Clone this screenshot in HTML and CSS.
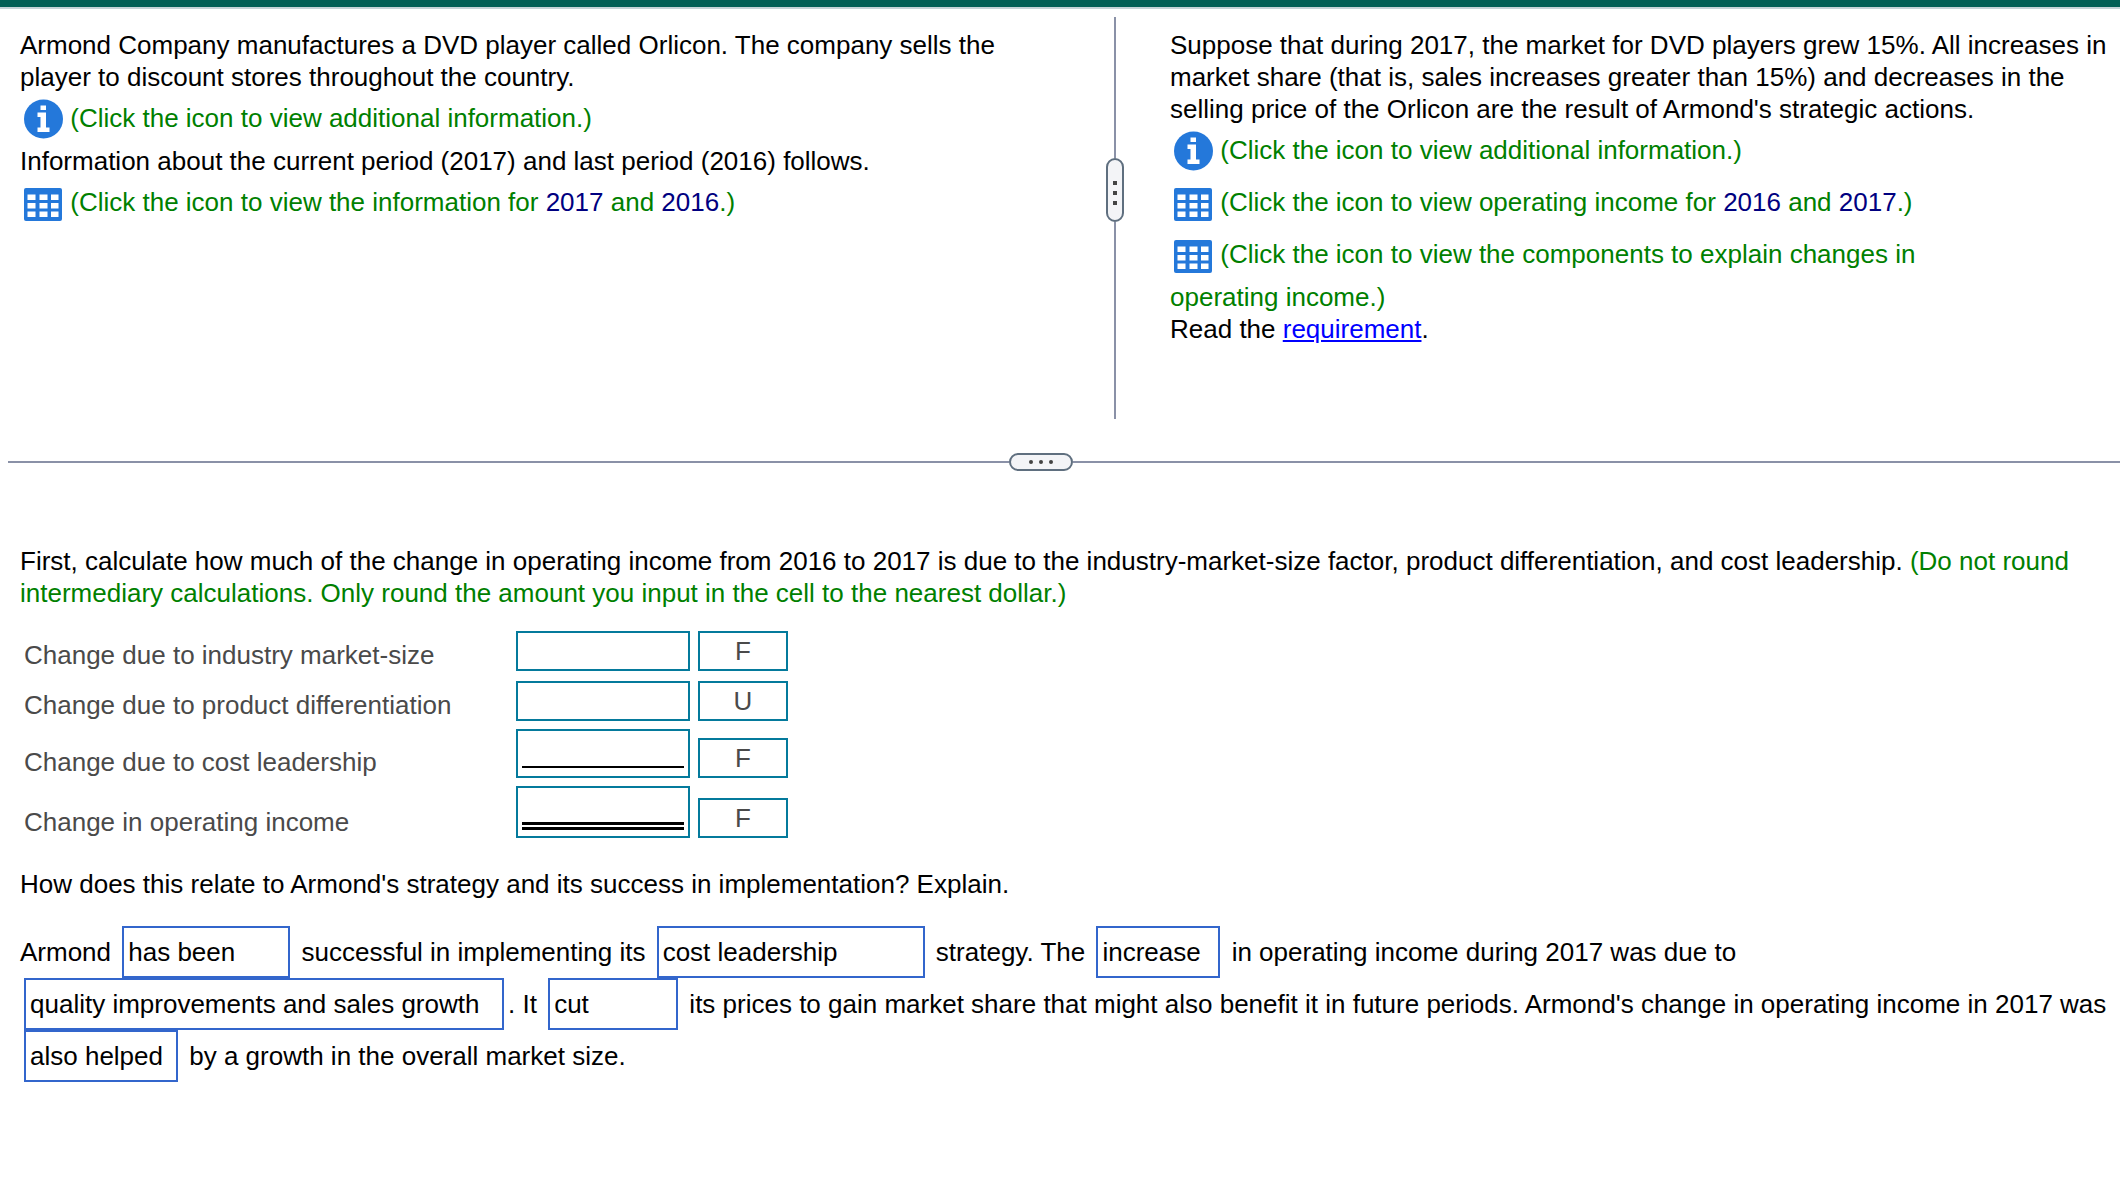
FILE: index.html
```html
<!doctype html>
<html lang="en">
<head>
    <meta charset="UTF-8">
    <meta name="viewport" content="width=device-width, initial-scale=1">
    <title>Armond Company</title>
    <link rel="stylesheet" href="styles.css">
</head>
<body>
<!-- shared icons -->
<svg class="sprite" aria-hidden="true">
    <symbol id="icon-info" viewBox="0 0 43 52">
        <circle cx="23.5" cy="26" r="19.5" fill="#2478da"/>
        <path fill="#fff" d="M20.5 12.5h5.5v4.5h-5.5zM17.5 19.5H26v15h3.5V39h-12v-4.500h3V24h-3z"/>
    </symbol>
    <symbol id="icon-table" viewBox="0 0 43 52">
        <rect x="4" y="11" width="38" height="33" rx="2" fill="#2478da"/>
        <path fill="#fff" d="M7.500 17.500h8v5.500h-8zM19.500 17.500h8v5.500h-8zM31 17.500h7.500v5.500H31zM7.500 26h8v5.500h-8zM19.500 26h8v5.500h-8zM31 26h7.500v5.500H31zM7.500 34.500h8V40h-8zM19.500 34.500h8V40h-8zM31 34.500h7.500V40H31z"/>
    </symbol>
</svg>
<header class="topbar"></header>
<main>
    <div class="panes">
        <section class="pane">
            Armond Company manufactures a DVD player called Orlicon. The company sells the player to discount stores throughout the country.<br>
            <button type="button" class="icon_btn" aria-label="Additional information"><svg><use href="#icon-info"/></svg></button>
            <span class="hint">(Click the icon to view additional information.)</span><br>
            Information about the current period (2017) and last period (2016) follows.<br>
            <button type="button" class="icon_btn" aria-label="Data table"><svg><use href="#icon-table"/></svg></button>
            <span class="hint">(Click the icon to view the information for <span class="year">2017</span> and <span class="year">2016</span>.)</span>
        </section>
        <div class="split_v"><button type="button" class="handle" aria-label="Resize panes"><i></i><i></i><i></i></button></div>
        <section class="pane pane_right">
            Suppose that during 2017, the market for DVD players grew 15%. All increases in market share (that is, sales increases greater than 15%) and decreases in the selling price of the Orlicon are the result of Armond's strategic actions.<br>
            <button type="button" class="icon_btn" aria-label="Additional information"><svg><use href="#icon-info"/></svg></button>
            <span class="hint">(Click the icon to view additional information.)</span><br>
            <button type="button" class="icon_btn" aria-label="Operating income"><svg><use href="#icon-table"/></svg></button>
            <span class="hint">(Click the icon to view operating income for <span class="year">2016</span> and <span class="year">2017</span>.)</span><br>
            <button type="button" class="icon_btn" aria-label="Components"><svg><use href="#icon-table"/></svg></button>
            <span class="hint">(Click the icon to view the components to explain changes in<br>operating income.)</span><br>
            Read the <a href="#">requirement</a>.
        </section>
    </div>
    <div class="split_h"><button type="button" class="handle" aria-label="Resize question"><i></i><i></i><i></i></button></div>

    <form class="question">
        <p>First, calculate how much of the change in operating income from 2016 to 2017 is due to the industry-market-size factor, product differentiation, and cost leadership. <span class="hint">(Do not round intermediary calculations. Only round the amount you input in the cell to the nearest dollar.)</span></p>
        <table class="changes">
            <tr>
                <td><label for="market">Change due to industry market-size</label></td>
                <td><div class="amount"><input id="market" type="text"></div></td>
                <td><select class="effect" aria-label="Market-size effect"><option selected>F</option><option>U</option></select></td>
            </tr>
            <tr>
                <td><label for="product">Change due to product differentiation</label></td>
                <td><div class="amount"><input id="product" type="text"></div></td>
                <td><select class="effect" aria-label="Product effect"><option>F</option><option selected>U</option></select></td>
            </tr>
            <tr class="last">
                <td><label for="cost">Change due to cost leadership</label></td>
                <td><div class="amount"><input id="cost" type="text"></div></td>
                <td><select class="effect" aria-label="Cost effect"><option selected>F</option><option>U</option></select></td>
            </tr>
            <tr class="total">
                <td><label for="income">Change in operating income</label></td>
                <td><div class="amount"><input id="income" type="text"></div></td>
                <td><select class="effect" aria-label="Income effect"><option selected>F</option><option>U</option></select></td>
            </tr>
        </table>
        <p class="ask">How does this relate to Armond's strategy and its success in implementation? Explain.</p>
        <p class="blanks">
            Armond <select class="w_been" aria-label="Success"><option>has been</option></select>
            successful in implementing its <select class="w_strategy" aria-label="Strategy"><option>cost leadership</option></select>
            strategy. The <select class="w_change" aria-label="Change"><option>increase</option></select>
            in operating income during 2017 was due to
            <select class="w_cause" aria-label="Cause"><option>quality improvements and sales growth</option></select>. It
            <select class="w_price" aria-label="Prices"><option>cut</option></select>
            its prices to gain market share that might also benefit it in future periods. Armond's change in operating income in 2017 was
            <select class="w_help" aria-label="Market effect"><option>also helped</option></select>
            by a growth in the overall market size.
        </p>
    </form>
</main>
</body>
</html>
```
FILE: styles.css
```css
*{box-sizing:border-box}
body{margin:0;background:#fff;color:#000;font:26px/32px "Liberation Sans",Arial,sans-serif}
button,input,select{font:inherit;color:inherit;margin:0;padding:0;border:0;border-radius:0;background:none}
select{appearance:none}
p{margin:0}
a{color:#00f}
.sprite{position:absolute;width:0;height:0}
.topbar{height:9px;background:#035f56;border-bottom:2px solid #c6d3d8}
.hint{color:#008000}
.year{color:#000080}

/* upper panes */
.panes{display:grid;grid-template-columns:1106fr 18px 996fr;min-height:402px;margin-top:8px}
.pane{padding:12px 50px 0 20px}
.pane_right{padding:12px 8px 0 46px}
.icon_btn{width:43px;height:52px;vertical-align:-18px}
.icon_btn svg{display:block;width:43px;height:52px}

/* splitters */
.split_v,.split_h{display:flex;align-items:center}
.split_v{flex-direction:column}
.split_v::before,.split_v::after,.split_h::before,.split_h::after{content:"";background:#8a91a7}
.split_v::before{width:2px;height:141px}
.split_v::after{width:2px;flex:1}
.split_h{margin:34px 0 0 8px}
.split_h::before{height:2px;flex:1}
.split_h::after{height:2px;flex:1 1 46px}
.handle{display:flex;align-items:center;justify-content:center;gap:6px;width:64px;height:18px;border:2px solid #5f6f7f;border-radius:9px;background:#f3f4f7}
.handle i{width:4px;height:4px;border-radius:2px;background:#444}
.split_v .handle{flex-direction:column;width:18px;height:64px;padding-top:6px}
.split_v .handle i{border-radius:0}

/* question */
.question{padding:74px 8px 0 20px}
.changes{margin-top:12px;border-collapse:collapse;color:#4a4a4a}
.changes tr{height:50px}
.changes .last{height:57px}
.changes .total{height:60px}
.changes td{padding:0;vertical-align:bottom}
.changes td:first-child{width:496px;padding-left:4px}
.changes td:nth-child(2){width:182px}
.changes label{display:block}
.amount{width:174px;height:40px;padding:0 4px;border:2px solid #047a9c}
.amount input{display:block;width:100%;height:100%;outline:0}
.last .amount{height:49px;padding-bottom:8px}
.last input{border-bottom:2px solid #000}
.total .amount{height:52px;padding-bottom:6px}
.total input{border-bottom:8px double #000}
.effect{display:block;width:90px;height:40px;border:2px solid #047a9c;text-align:center;text-align-last:center}
.ask{margin-top:30px}
.blanks{margin-top:26px;line-height:52px}
.blanks select{height:52px;margin:0 4px;padding-left:4px;border:2px solid #36c;line-height:32px}
.w_been{width:168px}
.w_strategy{width:268px}
.w_change{width:124px}
.w_cause{width:480px}
.w_price{width:130px}
.w_help{width:154px}
```
